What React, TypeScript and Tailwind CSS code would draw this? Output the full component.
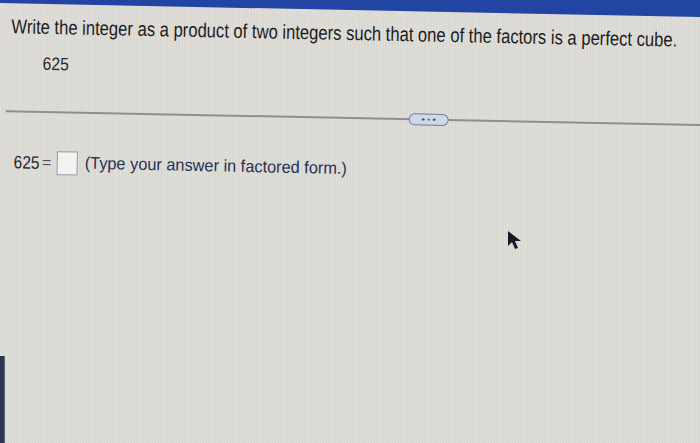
import React from "react";

export default function App() {
  return (
    <div className="w-[700px] h-[443px] overflow-hidden relative bg-[#dcdad5] bg-[repeating-linear-gradient(90deg,#e0ded9_0px,#e0ded9_1px,#d7d5d0_2px,#dcdad5_3px)]" style={{ fontFamily: '"Liberation Sans", Arial, sans-serif' }}>
      <div className="w-[760px] origin-top-left rotate-[1.15deg] flex flex-col">
        <div className="h-[40px] -mt-[37px] bg-[#2244a2]" />
        <div className="pl-[12px] pt-[12px] leading-[22px] text-[20px] text-[#1c1c1c] whitespace-nowrap">
          <span className="inline-block origin-left scale-x-[0.83]">Write the integer as a product of two integers such that one of the factors is a perfect cube.</span>
        </div>
        <div className="pl-[44px] pt-[16px] leading-[20px] text-[18px] text-[#2a2a2a]">
          <span className="inline-block origin-left scale-x-[0.87]">625</span>
        </div>
        <div className="relative mt-[37px] ml-[8px] h-[1.5px] bg-[#8c8e94]">
          <div className="absolute left-[403px] -top-[5px] w-[40px] h-[12px] rounded-full border border-[#6e7f9c] bg-[#cfd8e8] flex items-center justify-center gap-[3px]">
            <span className="w-[2.5px] h-[2.5px] rounded-full bg-[#3a4d78]" />
            <span className="w-[2.5px] h-[2.5px] rounded-full bg-[#3a4d78]" />
            <span className="w-[2.5px] h-[2.5px] rounded-full bg-[#3a4d78]" />
          </div>
        </div>
        <div className="mt-[38px] pl-[17px] flex items-center whitespace-nowrap h-[24px]">
          <span className="w-[28px] leading-[20px] text-[18px] text-[#2a2a2a]">
            <span className="inline-block origin-left scale-x-[0.86]">625</span>
          </span>
          <span className="leading-[20px] text-[16px] text-[#555]">=</span>
          <span className="ml-[6px] w-[21px] h-[24px] border border-[#8a96aa] bg-[#f2f2f0]" />
          <span className="ml-[7px] leading-[20px] text-[17px] text-[#233257]">
            <span className="inline-block origin-left scale-x-[0.96]">(Type your answer in factored form.)</span>
          </span>
        </div>
      </div>
      <svg className="absolute left-[506px] top-[229px]" width="18" height="24" viewBox="0 0 18 24">
        <path d="M2 2 L2 17 L6 13 L9 20 L12 19 L9 12 L15 12 Z" fill="#151a28" />
      </svg>
      <div className="absolute left-0 top-[356px] w-[5px] h-[90px] bg-[#2c3550] border-r border-[#5a6480]" />
    </div>
  );
}
